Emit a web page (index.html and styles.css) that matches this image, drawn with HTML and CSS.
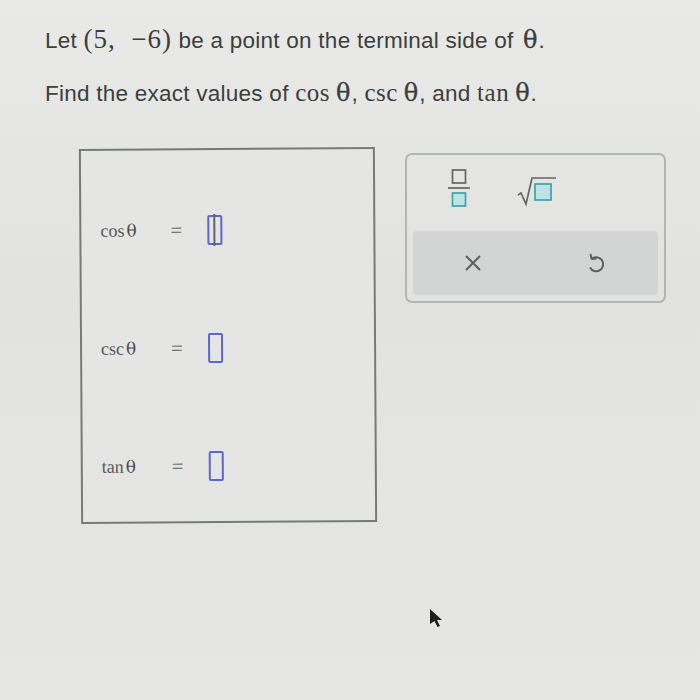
FILE: index.html
```html
<!DOCTYPE html>
<html>
<head>
<meta charset="utf-8">
<link rel="stylesheet" href="styles.css">
</head>
<body>
<div class="page">
  <p class="q q1">Let <span class="m big">(5,&nbsp; −6)</span> be a point on the terminal side of <span class="th">θ</span>.</p>
  <p class="q q2">Find the exact values of <span class="m">cos<span class="th">θ</span></span>, <span class="m">csc<span class="th">θ</span></span>, and <span class="m">tan<span class="th">θ</span></span>.</p>
  <div class="work">
    <div class="answers">
      <div class="row"><span class="fn">cos<span class="th2">θ</span></span><span class="eq">=</span><span class="slot active"></span></div>
      <div class="row"><span class="fn">csc<span class="th2">θ</span></span><span class="eq">=</span><span class="slot"></span></div>
      <div class="row"><span class="fn">tan<span class="th2">θ</span></span><span class="eq">=</span><span class="slot"></span></div>
    </div>
    <div class="pad">
      <div class="tools">
        <svg class="frac" width="24" height="40" viewBox="0 0 24 40"><rect x="5.5" y="2" width="13" height="13" fill="none" stroke="#666" stroke-width="1.7"/><line x1="1" y1="20" x2="23" y2="20" stroke="#666" stroke-width="1.7"/><rect x="5.5" y="25" width="13" height="13" fill="#bfe3e3" stroke="#3ea3ad" stroke-width="1.7"/></svg>
        <svg class="sqrt" width="40" height="32" viewBox="0 0 40 32"><polyline points="1,20 4,18 9,29 15,3 39,3" fill="none" stroke="#666" stroke-width="1.7"/><rect x="18" y="9" width="16" height="16" fill="#bfe3e3" stroke="#3ea3ad" stroke-width="1.7"/></svg>
      </div>
      <div class="actions">
        <svg width="20" height="20" viewBox="0 0 20 20"><path d="M3 3 L17 17 M17 3 L3 17" stroke="#56625f" stroke-width="2" fill="none"/></svg>
        <svg width="20" height="22" viewBox="0 0 20 22"><path d="M5.5 7 A7 7 0 1 1 4 15.5" stroke="#56625f" stroke-width="2" fill="none"/><path d="M5.5 7 L4.5 2 M5.5 7 L10.5 6.5" stroke="#56625f" stroke-width="2" fill="none"/></svg>
      </div>
    </div>
  </div>
  <svg class="cursor" width="16" height="20" viewBox="0 0 16 20"><path d="M2 1 L14 12 L9 12 L12 18 L9.5 19 L6.5 13 L2 16 Z" fill="#1d2220"/></svg>
</div>
</body>
</html>
```

FILE: styles.css
```css
html, body { margin: 0; padding: 0; }
body {
  width: 700px;
  height: 700px;
  overflow: hidden;
  background: linear-gradient(180deg, #e9e9e7 0%, #e2e2e0 40%, #e6e6e4 100%);
  font-family: "Liberation Sans", Arial, sans-serif;
  color: #3b3f3e;
}
.page {
  position: relative;
  padding: 26px 0 0 45px;
  height: 674px;
}
.q { margin: 0; font-size: 22.5px; line-height: 28px; height: 28px; letter-spacing: 0.25px; }
.q2 { margin-top: 26px; }
.m { font-family: "Liberation Serif", "Times New Roman", serif; font-size: 25px; letter-spacing: 0.5px; line-height: 1; }
.m.big { font-size: 27px; letter-spacing: 1px; }
.th { font-family: "DejaVu Serif", serif; font-size: 24px; margin: 0 1px 0 6px; letter-spacing: 0; line-height: 1; -webkit-text-stroke: 0.3px #3b3f3e; }
.q1 .th { margin-left: 3px; }
.th2 { font-family: "DejaVu Serif", serif; font-size: 17px; margin-left: 2px; color: #4a4f4e; }
.work {
  display: flex;
  align-items: flex-start;
  gap: 29px;
  margin-top: 40px;
  margin-left: 35px;
}
.answers {
  width: 296px;
  height: 375px;
  border: 2px solid #767b79;
  background: #e5e5e3;
  display: flex;
  flex-direction: column;
  padding: 65px 0 0 19px;
  box-sizing: border-box;
  gap: 88px;
  transform: rotate(-0.35deg);
}
.row { display: flex; align-items: center; height: 30px; }
.fn {
  font-family: "Liberation Serif", "Times New Roman", serif;
  font-size: 18px;
  color: #555a59;
  width: 70px;
}
.eq { font-size: 21px; color: #6e7472; width: 37px; font-family: "Liberation Serif", serif; }
.slot {
  width: 11px;
  height: 26px;
  border: 2px solid #5d66d0;
  border-radius: 2px;
  position: relative;
}
.slot.active::after {
  content: "";
  position: absolute;
  left: 4px; top: -3px;
  width: 2px; height: 32px;
  background: #5f6665;
}
.pad {
  margin-top: 5px;
  width: 261px;
  height: 150px;
  border: 2px solid #b1b6b4;
  border-radius: 7px;
  box-sizing: border-box;
  padding: 0 6px 6px 6px;
  display: flex;
  flex-direction: column;
}
.tools {
  display: flex;
  align-items: flex-start;
  height: 76px;
  padding-left: 34px;
  gap: 46px;
}
.frac { margin-top: 13px; }
.sqrt { margin-top: 20px; }
.actions {
  flex: 1;
  background: #d3d5d4;
  border-radius: 4px;
  display: flex;
  align-items: center;
  justify-content: space-between;
  padding: 0 52px 0 50px;
}
.cursor { position: absolute; left: 428px; top: 608px; }
```
